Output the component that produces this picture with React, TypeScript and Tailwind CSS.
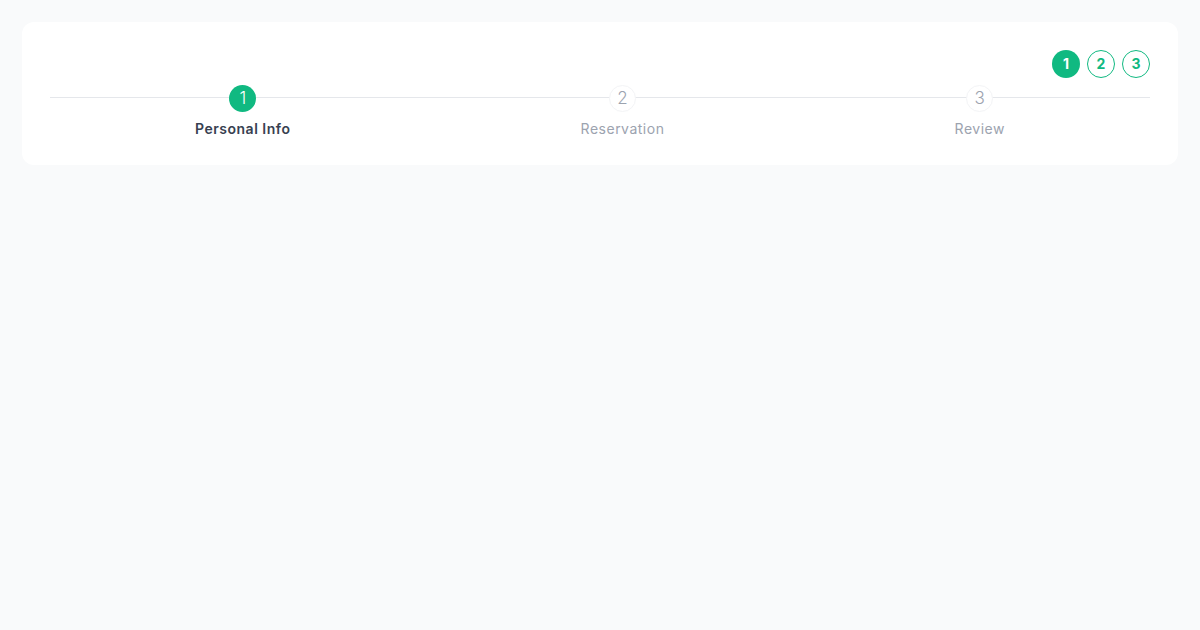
const steps = [
  { n: 1, label: "Personal Info" },
  { n: 2, label: "Reservation" },
  { n: 3, label: "Review" },
];

const current = 1;

export default function App() {
  return (
    <div
      className="min-h-screen w-full bg-[#f9fafb] p-[22px]"
      style={{ fontFamily: "Inter, 'Noto Sans', sans-serif" }}
    >
      <div className="rounded-xl bg-white px-7 pt-7 pb-[26px]">
        <div className="flex justify-end gap-[7px]">
          {steps.map((s) => (
            <span
              key={s.n}
              className={
                s.n === current
                  ? "flex h-7 w-7 items-center justify-center rounded-full bg-[#10b981] text-sm font-bold text-white"
                  : "flex h-7 w-7 items-center justify-center rounded-full border border-[#10b981] bg-white text-sm font-bold text-[#10b981]"
              }
            >
              {s.n}
            </span>
          ))}
        </div>

        <div className="relative mt-[7px] flex">
          <div className="absolute left-0 right-0 top-[12px] h-px bg-[#e5e7eb]" />
          {steps.map((s) => (
            <div key={s.n} className="relative flex flex-auto flex-col items-center">
              <span
                className={
                  s.n === current
                    ? "flex h-[27px] w-[27px] items-center justify-center rounded-full bg-[#10b981] text-[17px] font-light text-white"
                    : "flex h-[27px] w-[27px] items-center justify-center rounded-full border border-[#f3f4f6] bg-white text-[17px] font-light text-[#9ca3af]"
                }
              >
                {s.n}
              </span>
              <span
                className={
                  s.n === current
                    ? "mt-[7px] text-sm font-semibold tracking-[0.5px] text-[#374151]"
                    : "mt-[7px] text-sm tracking-[0.5px] text-[#9ca3af]"
                }
              >
                {s.label}
              </span>
            </div>
          ))}
        </div>
      </div>
    </div>
  );
}
